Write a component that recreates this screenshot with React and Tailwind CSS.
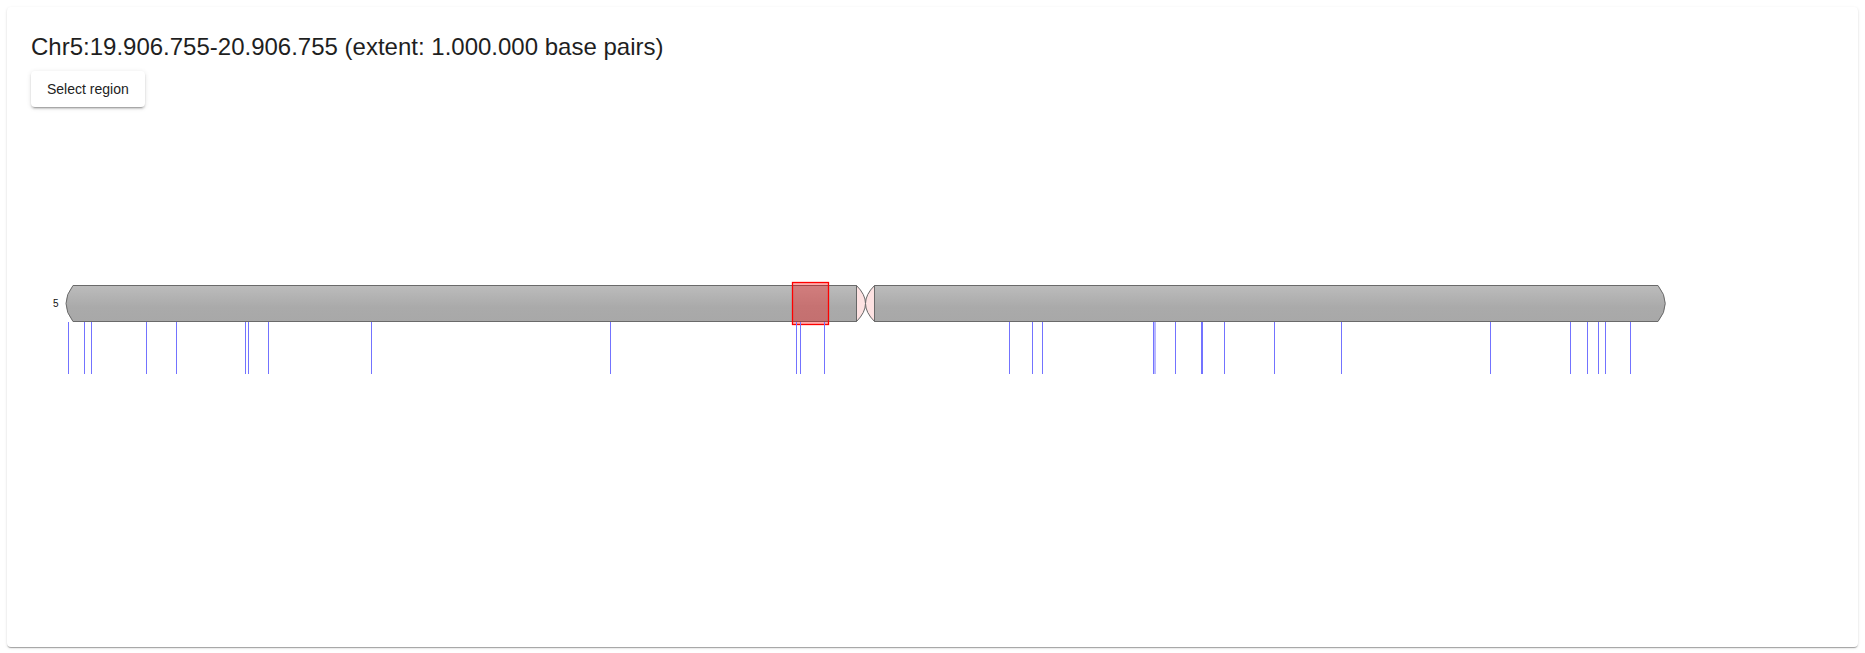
import React from 'react'

// tick positions along the chromosome (svg x coords)
const ticks = [
  37.5, 53.5, 60.5, 115.5, 145.5, 214.5, 217.5, 237.5, 340.5, 579.5,
  765.5, 769.5, 793.5,
  978.5, 1001.5, 1011.5, 1122.5, 1124, 1144.5, 1170.5, 1171.5, 1193.5,
  1243.5, 1310.5, 1459.5, 1539.5, 1556.5, 1567.5, 1574.5, 1599.5,
]

function Chromosome() {
  const top = 168.5
  const bot = 204.5
  const mid = (top + bot) / 2
  return (
    <svg width="1805" height="500" className="block mt-[10px]">
      <defs>
        <linearGradient id="arm" x1="0" y1="0" x2="0" y2="1">
          <stop offset="0" stopColor="#bcbcbc" />
          <stop offset="0.6" stopColor="#aaaaaa" />
          <stop offset="1" stopColor="#a8a8a8" />
        </linearGradient>
      </defs>

      <text x="22" y="190" fontSize="10" fontFamily="Liberation Sans, Arial, sans-serif" fill="#111">5</text>

      {/* p arm */}
      <path
        d={`M42,${top} L825.5,${top} L825.5,${bot} L42,${bot} Q28,${mid} 42,${top} Z`}
        fill="url(#arm)"
        stroke="#6a6a6a"
        strokeWidth="1"
      />
      {/* centromere */}
      <path d={`M825.5,${top} Q843.5,${mid} 825.5,${bot} Z`} fill="#fde2e2" stroke="#666" strokeWidth="1" />
      <path d={`M843.5,${top} Q825.5,${mid} 843.5,${bot} Z`} fill="#fde2e2" stroke="#666" strokeWidth="1" />
      {/* q arm */}
      <path
        d={`M843.5,${top} L1627,${top} Q1641.5,${mid} 1627,${bot} L843.5,${bot} Z`}
        fill="url(#arm)"
        stroke="#6a6a6a"
        strokeWidth="1"
      />

      {/* selected region */}
      <rect x="761.5" y="165.5" width="36" height="42" fill="rgba(255,0,0,0.33)" stroke="#ff0000" strokeWidth="1.3" />

      {ticks.map((x, i) => (
        <line key={i} x1={x} x2={x} y1="205" y2="257" stroke="#7373ff" strokeWidth="1" />
      ))}
    </svg>
  )
}

export default function App() {
  return (
    <div className="min-h-screen bg-white p-[7px]" style={{ fontFamily: '"Liberation Sans", Arial, sans-serif' }}>
      <div className="h-[640px] bg-white rounded p-6 shadow-[0_2px_1px_-1px_rgba(0,0,0,0.2),0_1px_1px_0_rgba(0,0,0,0.14),0_1px_3px_0_rgba(0,0,0,0.12)]">
        <h5 className="text-[24px] leading-[32px] text-[#1f1f1f]">
          Chr5:19.906.755-20.906.755 (extent: 1.000.000 base pairs)
        </h5>
        <button className="mt-2 h-9 px-4 bg-white rounded text-sm text-[#222] shadow-[0_3px_1px_-2px_rgba(0,0,0,0.2),0_2px_2px_0_rgba(0,0,0,0.14),0_1px_5px_0_rgba(0,0,0,0.12)]">
          Select region
        </button>
        <Chromosome />
      </div>
    </div>
  )
}
